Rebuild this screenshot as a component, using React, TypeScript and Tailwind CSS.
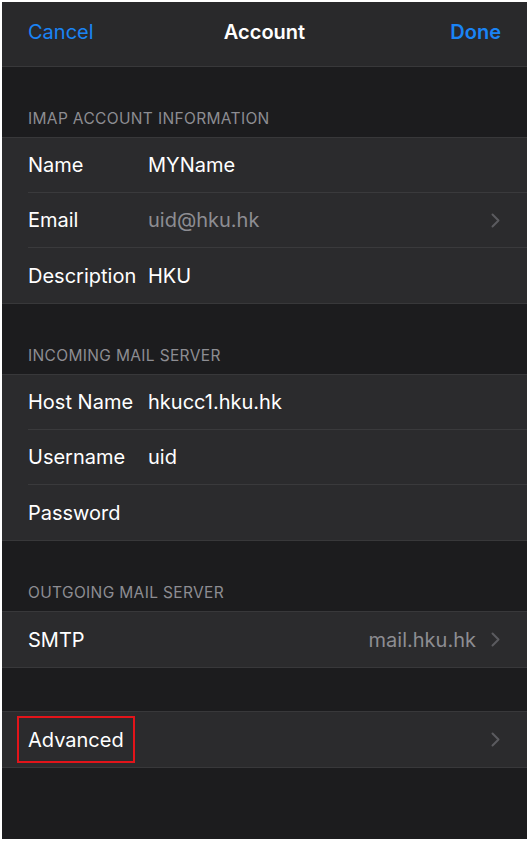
const font = { fontFamily: 'Inter, "Liberation Sans", sans-serif' };

function Chevron() {
  return (
    <svg width="9" height="15" viewBox="0 0 9 15" fill="none" className="shrink-0 translate-x-[1px]">
      <path d="M1.5 1.5 L7.5 7.5 L1.5 13.5" stroke="#5b5b5f" strokeWidth="2" strokeLinecap="round" strokeLinejoin="round" />
    </svg>
  );
}

type Row = {
  label: string;
  value?: string;
  muted?: boolean;
  right?: boolean;
  chevron?: boolean;
  marked?: boolean;
};

function Header({ title }: { title: string }) {
  return (
    <div className="flex h-[70px] items-end pb-[9px] pl-[26px] text-[15.5px] leading-[18px] tracking-[0.35px] text-[#8d8d92]">
      {title}
    </div>
  );
}

function Group({ rows }: { rows: Row[] }) {
  return (
    <div className="border-y border-[#38383a] bg-[#2b2b2d]">
      {rows.map((r, i) => (
        <div key={r.label} className="pl-[26px]">
          <div
            className={`flex h-[55px] items-center pr-[28px] text-[20px] leading-6 ${
              i < rows.length - 1 ? "border-b border-[#3a3a3c]" : ""
            }`}
          >
            <span className="w-[120px] shrink-0 text-white">
              <span className="relative">
                {r.label}
                {r.marked && (
                  <span className="absolute -left-[11px] -right-[11px] -top-[12px] -bottom-[11px] border-2 border-[#e2141a]" />
                )}
              </span>
            </span>
            <span
              className={`flex-1 ${r.muted ? "text-[#8d8d92]" : "text-white"} ${
                r.right ? "text-right pr-[14px]" : ""
              }`}
            >
              {r.value}
            </span>
            {r.chevron && <Chevron />}
          </div>
        </div>
      ))}
    </div>
  );
}

export default function App() {
  return (
    <div className="h-[841px] w-[529px] bg-white p-[2px]" style={font}>
      <div className="flex h-full flex-col bg-[#1c1c1e]">
        <div className="grid h-[65px] shrink-0 grid-cols-3 items-center border-b border-[#38383a] bg-[#29292b] px-[26px] pb-[4px] text-[20px]">
          <span className="text-[#1a84f5]">Cancel</span>
          <span className="text-center font-semibold text-white">Account</span>
          <span className="text-right font-semibold text-[#1a84f5]">Done</span>
        </div>
        <Header title="IMAP ACCOUNT INFORMATION" />
        <Group
          rows={[
            { label: "Name", value: "MYName" },
            { label: "Email", value: "uid@hku.hk", muted: true, chevron: true },
            { label: "Description", value: "HKU" },
          ]}
        />
        <Header title="INCOMING MAIL SERVER" />
        <Group
          rows={[
            { label: "Host Name", value: "hkucc1.hku.hk" },
            { label: "Username", value: "uid" },
            { label: "Password", value: "" },
          ]}
        />
        <Header title="OUTGOING MAIL SERVER" />
        <Group rows={[{ label: "SMTP", value: "mail.hku.hk", muted: true, right: true, chevron: true }]} />
        <div className="h-[43px] shrink-0" />
        <Group rows={[{ label: "Advanced", chevron: true, marked: true }]} />
      </div>
    </div>
  );
}
